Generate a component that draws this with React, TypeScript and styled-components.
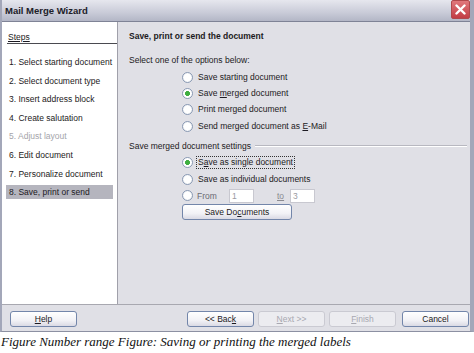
import styled, { createGlobalStyle } from 'styled-components'

const Global = createGlobalStyle`
  body {
    margin: 0;
    background: #ffffff;
    font-family: "Liberation Sans", Arial, sans-serif;
  }
`

const Dialog = styled.div`
  width: 468px;
  height: 331px;
  display: flex;
  flex-direction: column;
  border-left: 2px solid #a3a7b9;
  border-right: 4px solid #a3a7b9;
  border-bottom: 1px solid #8c90a2;
  background: #e0e0e6;
  color: #1c1a22;
  font-size: 8.5px;
  white-space: nowrap;
`
const TitleBar = styled.div`
  height: 21px;
  display: flex;
  align-items: center;
  justify-content: space-between;
  padding-left: 3px;
  background: linear-gradient(#e6e7ee, #c9cbd8 60%, #b3b6c6);
  border-bottom: 1px solid #7f8396;
  font-size: 9.5px;
  font-weight: bold;
  color: #202028;
`
const CloseBtn = styled.div`
  width: 17px;
  height: 17px;
  margin-top: -2px;
  background: linear-gradient(#e0787c, #c23c44);
  border: 1px solid #b0484c;
  border-radius: 2px;
  display: flex;
  align-items: center;
  justify-content: center;
`
const Body = styled.div`
  flex: 1;
  display: flex;
  border-bottom: 1px solid #a8a8b0;
`
const Sidebar = styled.div`
  width: 115px;
  background: #ffffff;
  border-right: 1px solid #a0a0aa;
  padding-top: 9px;
`
const StepsHead = styled.div`
  margin-left: 5px;
  padding-left: 1px;
  height: 12px;
  line-height: 12px;
  border-bottom: 1px solid #4a4a50;
  text-decoration: underline;
`
const StepList = styled.div`
  display: flex;
  flex-direction: column;
  gap: 4.6px;
  margin-top: 11px;
`
const Step = styled.div<{ $active?: boolean; $disabled?: boolean }>`
  height: 14px;
  line-height: 14px;
  margin: 0 4px;
  padding-left: 3px;
  background: ${p => (p.$active ? '#b5b5be' : 'transparent')};
  color: ${p => (p.$disabled ? '#a4a4aa' : '#1c1a22')};
`
const Content = styled.div`
  flex: 1;
  padding: 8px 3px 0 11px;
`
const Heading = styled.div`
  font-weight: bold;
  height: 12px;
  line-height: 12px;
`
const Label = styled.div`
  margin-top: 12px;
  height: 12px;
  line-height: 12px;
`
const RadioGroup = styled.div`
  display: flex;
  flex-direction: column;
  padding-left: 53px;
  margin-top: 3px;
`
const RadioRow = styled.label<{ $focus?: boolean }>`
  display: flex;
  align-items: center;
  height: 16.4px;
  span {
    margin-left: 3px;
    padding: 0 1px;
    border: 1px ${p => (p.$focus ? 'dotted #333' : 'solid transparent')};
    line-height: 11px;
  }
`
const Radio = styled.span<{ $on?: boolean }>`
  width: 9px;
  height: 9px;
  margin: 0 !important;
  padding: 0 !important;
  border: 1px solid #8a9ab4 !important;
  border-radius: 50%;
  background: ${p =>
    p.$on
      ? 'radial-gradient(circle, #3fae3f 0 2.2px, #ffffff 2.8px)'
      : 'radial-gradient(circle, #ffffff 50%, #dcdfe6)'};
  box-sizing: content-box;
  flex: none;
`
const Section = styled.div`
  display: flex;
  align-items: center;
  margin-top: 5px;
  height: 12px;
  &::after {
    content: '';
    flex: 1;
    height: 1px;
    background: #b8b8c0;
    border-bottom: 1px solid #ffffff;
    margin-left: 4px;
  }
`
const FromRow = styled.div`
  display: flex;
  align-items: center;
  height: 17px;
`
const FromText = styled.span`
  margin-left: 4px;
  width: 32px;
  color: #6a6a72;
`
const NumBox = styled.div`
  width: 25px;
  height: 14px;
  background: #ffffff;
  border: 1px solid #c8c8d0;
  color: #9a9aa2;
  padding-left: 2px;
  line-height: 13px;
  box-sizing: border-box;
`
const ToText = styled.span`
  color: #8a8a90;
  margin: 0 6px 0 23px;
  text-decoration: underline;
`
const Button = styled.div<{ $w: number; $disabled?: boolean }>`
  width: ${p => p.$w}px;
  height: 16px;
  box-sizing: border-box;
  border: 1px solid ${p => (p.$disabled ? '#cacad2' : '#7386aa')};
  border-radius: 3px;
  background: ${p => (p.$disabled ? '#ececf0' : 'linear-gradient(#ffffff, #f2f2f6 60%, #dadae4)')};
  color: ${p => (p.$disabled ? '#a8a8b0' : '#1c1a22')};
  display: flex;
  align-items: center;
  justify-content: center;
`
const Footer = styled.div`
  height: 26px;
  display: flex;
  align-items: flex-start;
  padding: 6px 0 0 8px;
  box-sizing: border-box;
  gap: 4px;
`
const Spacer = styled.div`
  width: 102px;
`
const Caption = styled.div`
  font-family: "Liberation Serif", "Times New Roman", serif;
  font-style: italic;
  font-size: 13px;
  line-height: 20px;
  padding-left: 1px;
  color: #111;
`

const steps = [
  '1.  Select starting document',
  '2.  Select document type',
  '3.  Insert address block',
  '4.  Create salutation',
  '5.  Adjust layout',
  '6.  Edit document',
  '7.  Personalize document',
  '8.  Save, print or send',
]

export default function App() {
  return (
    <>
      <Global />
      <Dialog>
        <TitleBar>
          Mail Merge Wizard
          <CloseBtn>
            <svg width="11" height="11" viewBox="0 0 11 11">
              <path d="M1.5 1.5 L9.5 9.5 M9.5 1.5 L1.5 9.5" stroke="#fff" strokeWidth="2.4" strokeLinecap="round" />
            </svg>
          </CloseBtn>
        </TitleBar>
        <Body>
          <Sidebar>
            <StepsHead>Steps</StepsHead>
            <StepList>
              {steps.map((s, i) => (
                <Step key={s} $active={i === 7} $disabled={i === 4}>
                  {s}
                </Step>
              ))}
            </StepList>
          </Sidebar>
          <Content>
            <Heading>Save, print or send the document</Heading>
            <Label>Select one of the options below:</Label>
            <RadioGroup>
              <RadioRow><Radio /><span>Save starting document</span></RadioRow>
              <RadioRow><Radio $on /><span>Save <u>m</u>erged document</span></RadioRow>
              <RadioRow><Radio /><span>Print merged document</span></RadioRow>
              <RadioRow><Radio /><span>Send merged document as <u>E</u>-Mail</span></RadioRow>
            </RadioGroup>
            <Section>Save merged document settings</Section>
            <RadioGroup>
              <RadioRow $focus><Radio $on /><span>S<u>a</u>ve as single document</span></RadioRow>
              <RadioRow><Radio /><span>Save as individual documents</span></RadioRow>
              <FromRow>
                <Radio />
                <FromText>From</FromText>
                <NumBox>1</NumBox>
                <ToText>to</ToText>
                <NumBox>3</NumBox>
              </FromRow>
              <Button $w={110}>Save Do<u>c</u>uments</Button>
            </RadioGroup>
          </Content>
        </Body>
        <Footer>
          <Button $w={67}><u>H</u>elp</Button>
          <Spacer />
          <Button $w={67}>&lt;&lt; Bac<u>k</u></Button>
          <Button $w={67} $disabled><u>N</u>ext &gt;&gt;</Button>
          <Button $w={67} $disabled><u>F</u>inish</Button>
          <Button $w={67} style={{ marginLeft: 2 }}>Cancel</Button>
        </Footer>
      </Dialog>
      <Caption>Figure Number range Figure: Saving or printing the merged labels</Caption>
    </>
  )
}
